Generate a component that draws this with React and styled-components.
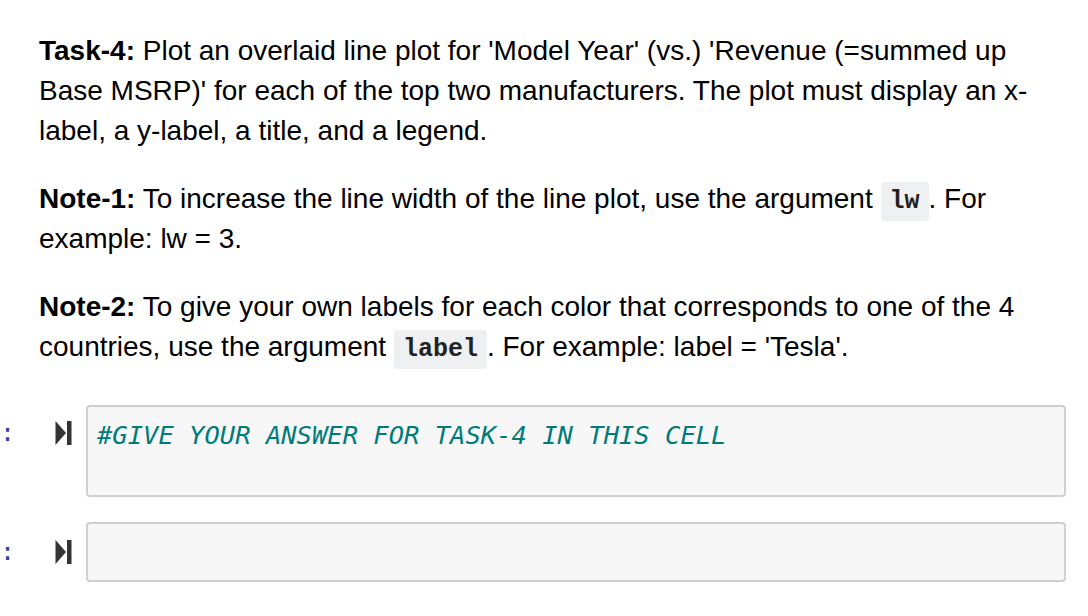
import React from 'react';
import styled, { createGlobalStyle } from 'styled-components';

const GlobalStyle = createGlobalStyle`
    html, body {
        margin: 0;
        padding: 0;
        background: #ffffff;
    }
`;

const Notebook = styled.div`
    width: 1088px;
    height: 616px;
    overflow: hidden;
    background: #ffffff;
    font-family: 'Liberation Sans', Arial, sans-serif;
    color: #000000;
`;

const Markdown = styled.div`
    padding: 31px 38px 0 39px;
    font-size: 28px;
    line-height: 40px;
`;

const Paragraph = styled.p`
    margin: 0 0 28px 0;

    &:last-child {
        margin-bottom: 0;
    }
`;

const Code = styled.code`
    font-family: 'Liberation Mono', 'Courier New', monospace;
    font-weight: 700;
    font-size: 25px;
    line-height: 1;
    color: #222222;
    background: #eff0f1;
    border-radius: 3px;
    padding: 5px 9px;
`;

const Cells = styled.div`
    display: flex;
    flex-direction: column;
    gap: 25px;
    margin-top: 38px;
    padding-right: 22px;
`;

const CellRow = styled.div`
    display: flex;
    align-items: flex-start;
`;

const Prompt = styled.div`
    width: 86px;
    flex-shrink: 0;
    display: flex;
    align-items: center;
    gap: 40px;
    padding-top: ${p => p.$offset}px;
    box-sizing: border-box;
`;

const Colon = styled.span`
    font-family: 'DejaVu Sans Mono', monospace;
    font-size: 25px;
    line-height: 24px;
    color: #303f9f;
    width: 15px;
    text-align: center;
`;

const RunIcon = () => (
    <svg width="17" height="24" viewBox="0 0 17 24">
        <path d="M0.5 0 L11 12 L0.5 24 Z" fill="#333333" />
        <rect x="12" y="0" width="4.5" height="24" fill="#333333" />
    </svg>
);

const InputBox = styled.div`
    flex: 1;
    box-sizing: border-box;
    min-height: ${p => p.$height}px;
    background: #f7f7f7;
    border: 2px solid #cfcfcf;
    border-radius: 4px;
    padding: 12px 9px;
    font-family: 'DejaVu Sans Mono', monospace;
    font-size: 25.5px;
    line-height: 32px;
`;

const Comment = styled.span`
    color: #007b7b;
    font-style: italic;
`;

const App = () => (
    <Notebook>
        <GlobalStyle />

        <Markdown>
            <Paragraph>
                <strong>Task-4:</strong> Plot an overlaid line plot for 'Model Year' (vs.) 'Revenue (=summed up
                Base MSRP)' for each of the top two manufacturers. The plot must display an x-label, a
                y-label, a title, and a legend.
            </Paragraph>

            <Paragraph>
                <strong>Note-1:</strong> To increase the line width of the line plot, use the argument{' '}
                <Code>lw</Code>. For example: lw = 3.
            </Paragraph>

            <Paragraph>
                <strong>Note-2:</strong> To give your own labels for each color that corresponds to one of the 4
                countries, use the argument <Code>label</Code>. For example: label = 'Tesla'.
            </Paragraph>
        </Markdown>

        <Cells>
            <CellRow>
                <Prompt $offset={16}>
                    <Colon>:</Colon>
                    <RunIcon />
                </Prompt>
                <InputBox $height={92}>
                    <Comment>#GIVE YOUR ANSWER FOR TASK-4 IN THIS CELL</Comment>
                </InputBox>
            </CellRow>

            <CellRow>
                <Prompt $offset={18}>
                    <Colon>:</Colon>
                    <RunIcon />
                </Prompt>
                <InputBox $height={60} />
            </CellRow>
        </Cells>
    </Notebook>
);

export default App;
